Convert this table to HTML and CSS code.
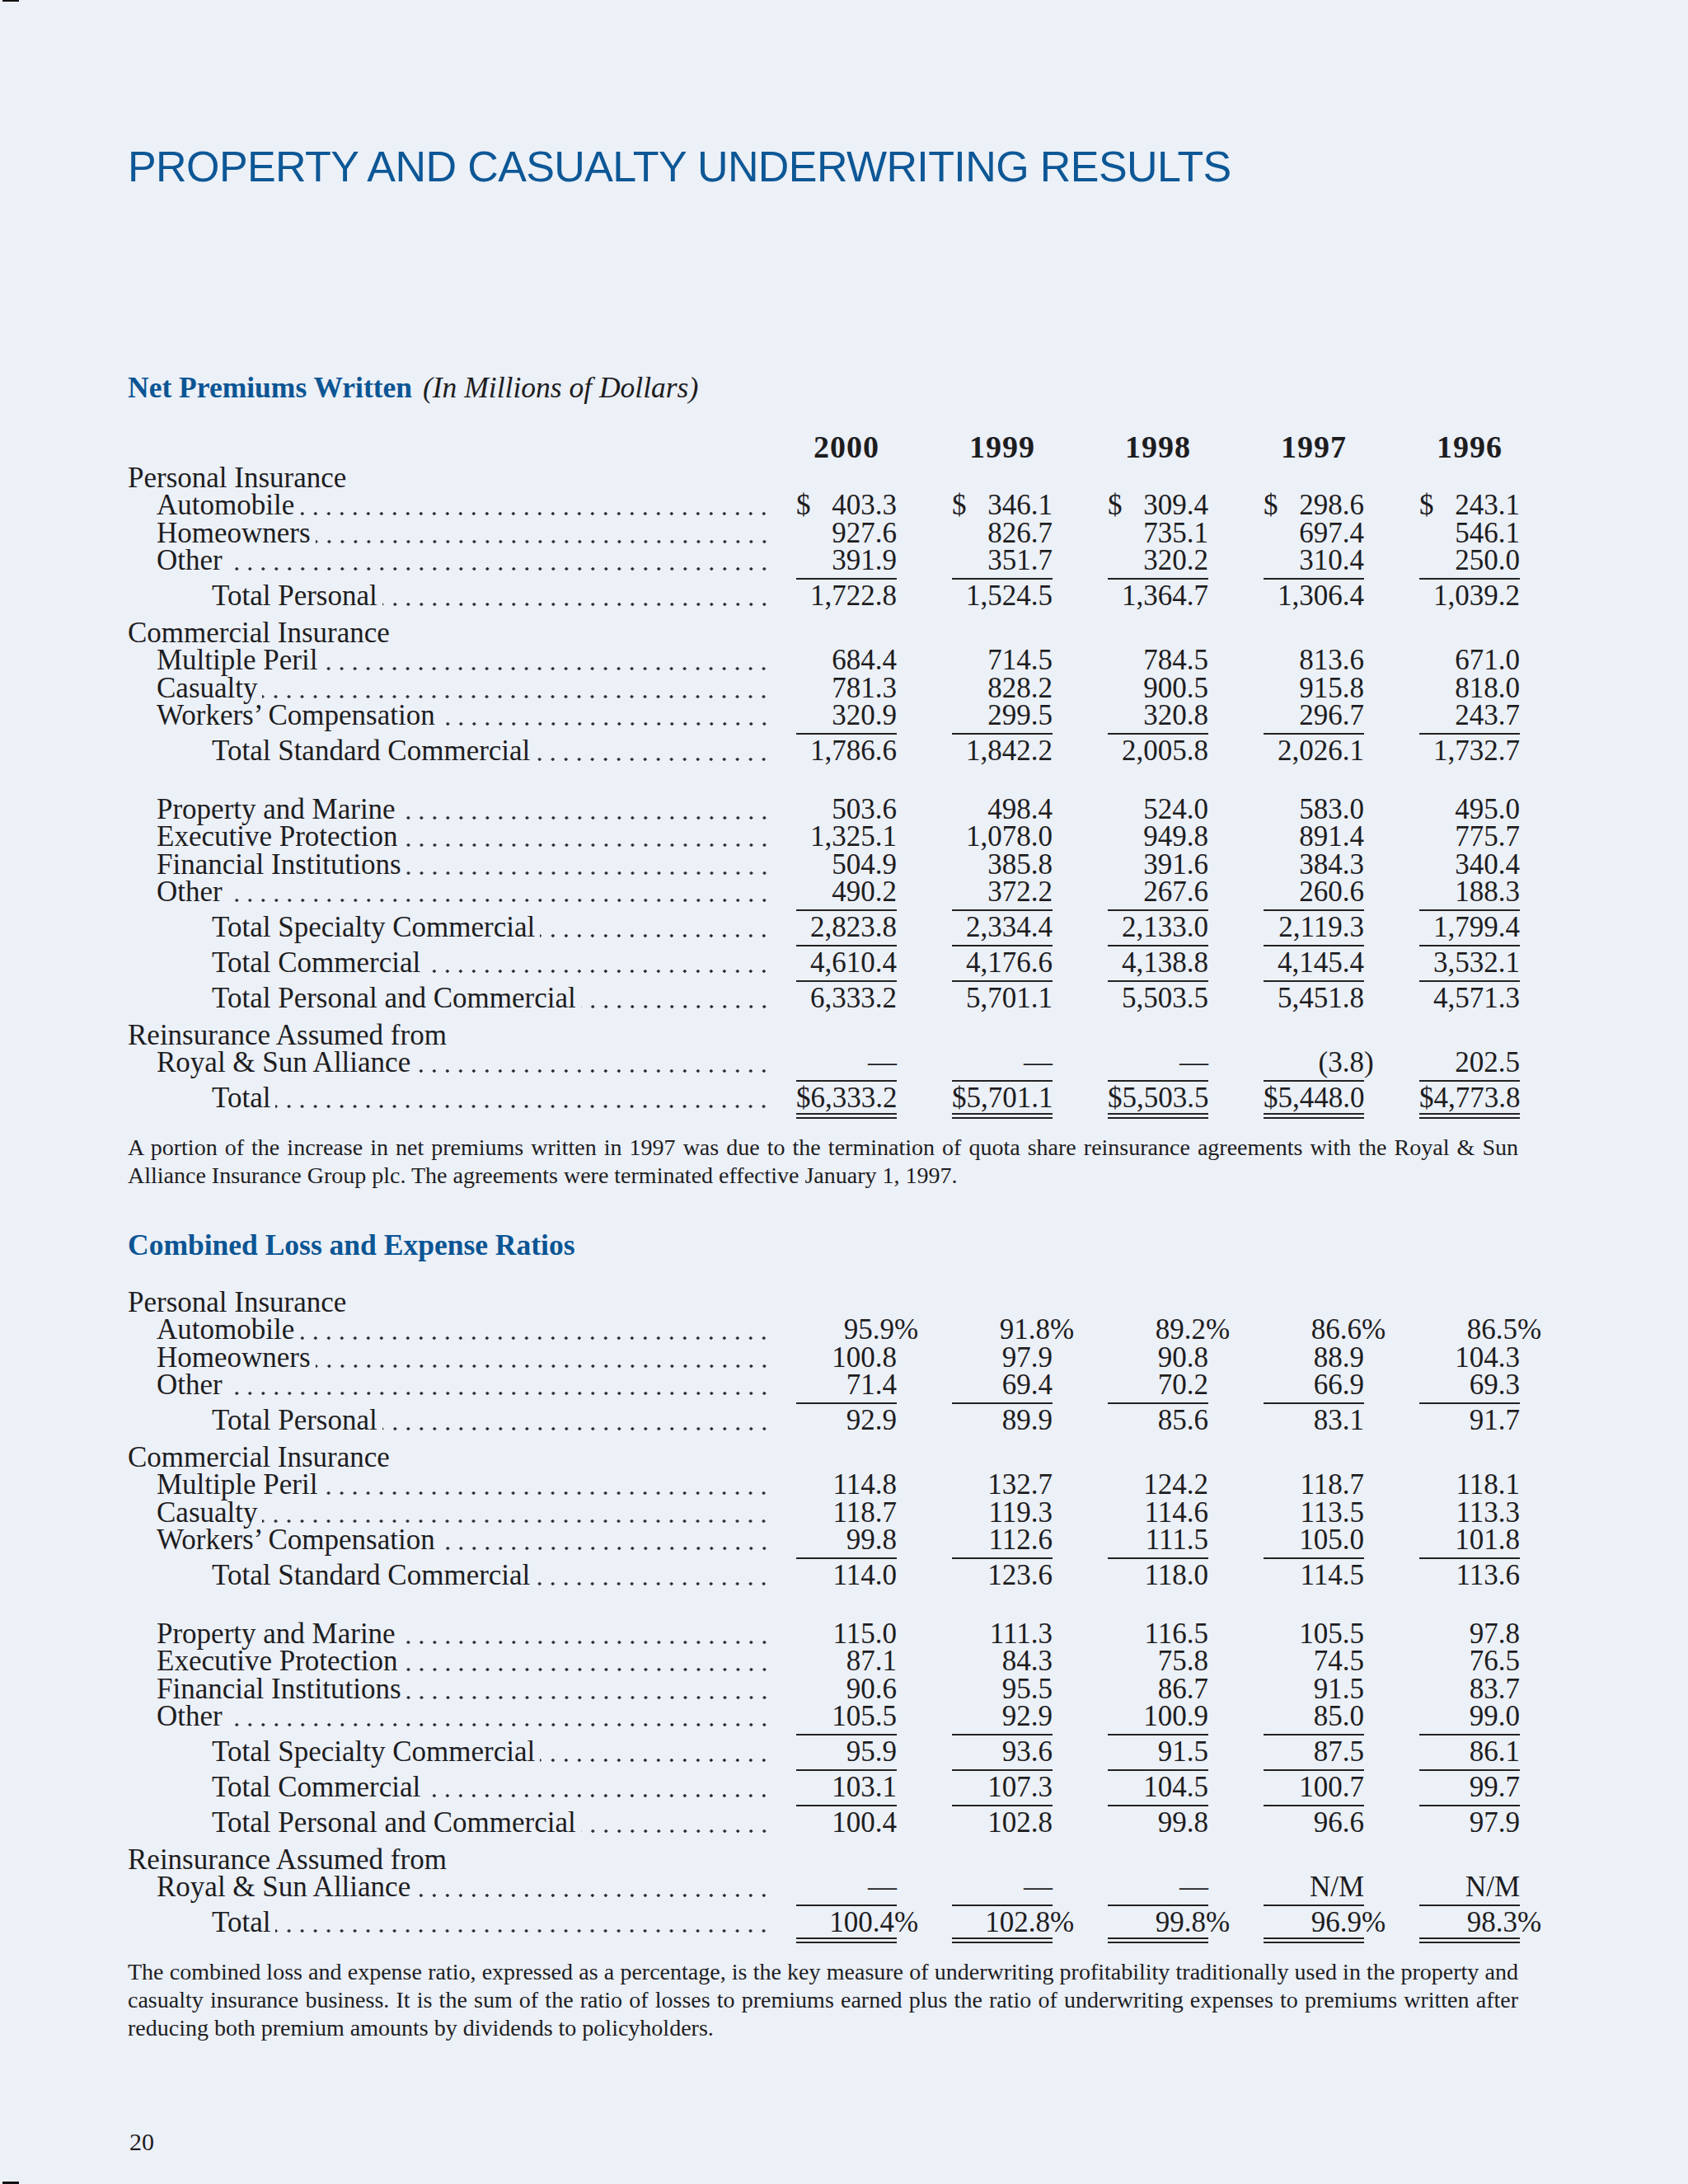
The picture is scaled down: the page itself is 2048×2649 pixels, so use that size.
FILE: index.html
```html
<!DOCTYPE html>
<html>
<head>
    <title>Property and Casualty Underwriting Results</title>
    <link rel="stylesheet" href="styles.css">
</head>
<body>
    <div class="crop"></div>
    <div class="page">
        <h1 class="title">PROPERTY AND CASUALTY UNDERWRITING RESULTS</h1>

        <h2 class="section first">Net Premiums Written <em>(In Millions of Dollars)</em></h2>
        <div class="table net">
            <div class="row years">
                <div class="label"></div>
                <div class="vals"><div class="v">2000</div><div class="v">1999</div><div class="v">1998</div><div class="v">1997</div><div class="v">1996</div></div>
            </div>
            <div class="row">
                <div class="label"><span>Personal Insurance</span></div>
            </div>
            <div class="row">
                <div class="label l1"><span>Automobile</span><span class="dots"></span></div>
                <div class="vals">
                    <div class="v cur"><span>$</span><span>403.3</span></div>
                    <div class="v cur"><span>$</span><span>346.1</span></div>
                    <div class="v cur"><span>$</span><span>309.4</span></div>
                    <div class="v cur"><span>$</span><span>298.6</span></div>
                    <div class="v cur"><span>$</span><span>243.1</span></div>
                </div>
            </div>
            <div class="row">
                <div class="label l1"><span>Homeowners</span><span class="dots"></span></div>
                <div class="vals"><div class="v">927.6</div><div class="v">826.7</div><div class="v">735.1</div><div class="v">697.4</div><div class="v">546.1</div></div>
            </div>
            <div class="row">
                <div class="label l1"><span>Other</span><span class="dots"></span></div>
                <div class="vals"><div class="v">391.9</div><div class="v">351.7</div><div class="v">320.2</div><div class="v">310.4</div><div class="v">250.0</div></div>
            </div>
            <div class="row total">
                <div class="label l2"><span>Total Personal</span><span class="dots"></span></div>
                <div class="vals"><div class="v">1,722.8</div><div class="v">1,524.5</div><div class="v">1,364.7</div><div class="v">1,306.4</div><div class="v">1,039.2</div></div>
            </div>
            <div class="row group">
                <div class="label"><span>Commercial Insurance</span></div>
            </div>
            <div class="row">
                <div class="label l1"><span>Multiple Peril</span><span class="dots"></span></div>
                <div class="vals"><div class="v">684.4</div><div class="v">714.5</div><div class="v">784.5</div><div class="v">813.6</div><div class="v">671.0</div></div>
            </div>
            <div class="row">
                <div class="label l1"><span>Casualty</span><span class="dots"></span></div>
                <div class="vals"><div class="v">781.3</div><div class="v">828.2</div><div class="v">900.5</div><div class="v">915.8</div><div class="v">818.0</div></div>
            </div>
            <div class="row">
                <div class="label l1"><span>Workers’ Compensation</span><span class="dots"></span></div>
                <div class="vals"><div class="v">320.9</div><div class="v">299.5</div><div class="v">320.8</div><div class="v">296.7</div><div class="v">243.7</div></div>
            </div>
            <div class="row total">
                <div class="label l2"><span>Total Standard Commercial</span><span class="dots"></span></div>
                <div class="vals"><div class="v">1,786.6</div><div class="v">1,842.2</div><div class="v">2,005.8</div><div class="v">2,026.1</div><div class="v">1,732.7</div></div>
            </div>
            <div class="row sep">
                <div class="label l1"><span>Property and Marine</span><span class="dots"></span></div>
                <div class="vals"><div class="v">503.6</div><div class="v">498.4</div><div class="v">524.0</div><div class="v">583.0</div><div class="v">495.0</div></div>
            </div>
            <div class="row">
                <div class="label l1"><span>Executive Protection</span><span class="dots"></span></div>
                <div class="vals"><div class="v">1,325.1</div><div class="v">1,078.0</div><div class="v">949.8</div><div class="v">891.4</div><div class="v">775.7</div></div>
            </div>
            <div class="row">
                <div class="label l1"><span>Financial Institutions</span><span class="dots"></span></div>
                <div class="vals"><div class="v">504.9</div><div class="v">385.8</div><div class="v">391.6</div><div class="v">384.3</div><div class="v">340.4</div></div>
            </div>
            <div class="row">
                <div class="label l1"><span>Other</span><span class="dots"></span></div>
                <div class="vals"><div class="v">490.2</div><div class="v">372.2</div><div class="v">267.6</div><div class="v">260.6</div><div class="v">188.3</div></div>
            </div>
            <div class="row total">
                <div class="label l2"><span>Total Specialty Commercial</span><span class="dots"></span></div>
                <div class="vals"><div class="v">2,823.8</div><div class="v">2,334.4</div><div class="v">2,133.0</div><div class="v">2,119.3</div><div class="v">1,799.4</div></div>
            </div>
            <div class="row total">
                <div class="label l2"><span>Total Commercial</span><span class="dots"></span></div>
                <div class="vals"><div class="v">4,610.4</div><div class="v">4,176.6</div><div class="v">4,138.8</div><div class="v">4,145.4</div><div class="v">3,532.1</div></div>
            </div>
            <div class="row total">
                <div class="label l2"><span>Total Personal and Commercial</span><span class="dots"></span></div>
                <div class="vals"><div class="v">6,333.2</div><div class="v">5,701.1</div><div class="v">5,503.5</div><div class="v">5,451.8</div><div class="v">4,571.3</div></div>
            </div>
            <div class="row group">
                <div class="label"><span>Reinsurance Assumed from</span></div>
            </div>
            <div class="row">
                <div class="label l1"><span>Royal &amp; Sun Alliance</span><span class="dots"></span></div>
                <div class="vals"><div class="v">—</div><div class="v">—</div><div class="v">—</div><div class="v">(3.8<span class="paren">)</span></div><div class="v">202.5</div></div>
            </div>
            <div class="row total grand">
                <div class="label l2"><span>Total</span><span class="dots"></span></div>
                <div class="vals"><div class="v">$6,333.2</div><div class="v">$5,701.1</div><div class="v">$5,503.5</div><div class="v">$5,448.0</div><div class="v">$4,773.8</div></div>
            </div>
        </div>
        <p class="note">A portion of the increase in net premiums written in 1997 was due to the termination of quota share reinsurance agreements with the Royal &amp; Sun Alliance Insurance Group plc. The agreements were terminated effective January 1, 1997.</p>

        <h2 class="section second">Combined Loss and Expense Ratios</h2>
        <div class="table ratios">
            <div class="row">
                <div class="label"><span>Personal Insurance</span></div>
            </div>
            <div class="row">
                <div class="label l1"><span>Automobile</span><span class="dots"></span></div>
                <div class="vals"><div class="v">95.9<span class="pct">%</span></div><div class="v">91.8<span class="pct">%</span></div><div class="v">89.2<span class="pct">%</span></div><div class="v">86.6<span class="pct">%</span></div><div class="v">86.5<span class="pct">%</span></div></div>
            </div>
            <div class="row">
                <div class="label l1"><span>Homeowners</span><span class="dots"></span></div>
                <div class="vals"><div class="v">100.8</div><div class="v">97.9</div><div class="v">90.8</div><div class="v">88.9</div><div class="v">104.3</div></div>
            </div>
            <div class="row">
                <div class="label l1"><span>Other</span><span class="dots"></span></div>
                <div class="vals"><div class="v">71.4</div><div class="v">69.4</div><div class="v">70.2</div><div class="v">66.9</div><div class="v">69.3</div></div>
            </div>
            <div class="row total">
                <div class="label l2"><span>Total Personal</span><span class="dots"></span></div>
                <div class="vals"><div class="v">92.9</div><div class="v">89.9</div><div class="v">85.6</div><div class="v">83.1</div><div class="v">91.7</div></div>
            </div>
            <div class="row group">
                <div class="label"><span>Commercial Insurance</span></div>
            </div>
            <div class="row">
                <div class="label l1"><span>Multiple Peril</span><span class="dots"></span></div>
                <div class="vals"><div class="v">114.8</div><div class="v">132.7</div><div class="v">124.2</div><div class="v">118.7</div><div class="v">118.1</div></div>
            </div>
            <div class="row">
                <div class="label l1"><span>Casualty</span><span class="dots"></span></div>
                <div class="vals"><div class="v">118.7</div><div class="v">119.3</div><div class="v">114.6</div><div class="v">113.5</div><div class="v">113.3</div></div>
            </div>
            <div class="row">
                <div class="label l1"><span>Workers’ Compensation</span><span class="dots"></span></div>
                <div class="vals"><div class="v">99.8</div><div class="v">112.6</div><div class="v">111.5</div><div class="v">105.0</div><div class="v">101.8</div></div>
            </div>
            <div class="row total">
                <div class="label l2"><span>Total Standard Commercial</span><span class="dots"></span></div>
                <div class="vals"><div class="v">114.0</div><div class="v">123.6</div><div class="v">118.0</div><div class="v">114.5</div><div class="v">113.6</div></div>
            </div>
            <div class="row sep">
                <div class="label l1"><span>Property and Marine</span><span class="dots"></span></div>
                <div class="vals"><div class="v">115.0</div><div class="v">111.3</div><div class="v">116.5</div><div class="v">105.5</div><div class="v">97.8</div></div>
            </div>
            <div class="row">
                <div class="label l1"><span>Executive Protection</span><span class="dots"></span></div>
                <div class="vals"><div class="v">87.1</div><div class="v">84.3</div><div class="v">75.8</div><div class="v">74.5</div><div class="v">76.5</div></div>
            </div>
            <div class="row">
                <div class="label l1"><span>Financial Institutions</span><span class="dots"></span></div>
                <div class="vals"><div class="v">90.6</div><div class="v">95.5</div><div class="v">86.7</div><div class="v">91.5</div><div class="v">83.7</div></div>
            </div>
            <div class="row">
                <div class="label l1"><span>Other</span><span class="dots"></span></div>
                <div class="vals"><div class="v">105.5</div><div class="v">92.9</div><div class="v">100.9</div><div class="v">85.0</div><div class="v">99.0</div></div>
            </div>
            <div class="row total">
                <div class="label l2"><span>Total Specialty Commercial</span><span class="dots"></span></div>
                <div class="vals"><div class="v">95.9</div><div class="v">93.6</div><div class="v">91.5</div><div class="v">87.5</div><div class="v">86.1</div></div>
            </div>
            <div class="row total">
                <div class="label l2"><span>Total Commercial</span><span class="dots"></span></div>
                <div class="vals"><div class="v">103.1</div><div class="v">107.3</div><div class="v">104.5</div><div class="v">100.7</div><div class="v">99.7</div></div>
            </div>
            <div class="row total">
                <div class="label l2"><span>Total Personal and Commercial</span><span class="dots"></span></div>
                <div class="vals"><div class="v">100.4</div><div class="v">102.8</div><div class="v">99.8</div><div class="v">96.6</div><div class="v">97.9</div></div>
            </div>
            <div class="row group">
                <div class="label"><span>Reinsurance Assumed from</span></div>
            </div>
            <div class="row">
                <div class="label l1"><span>Royal &amp; Sun Alliance</span><span class="dots"></span></div>
                <div class="vals"><div class="v">—</div><div class="v">—</div><div class="v">—</div><div class="v">N/M</div><div class="v">N/M</div></div>
            </div>
            <div class="row total grand">
                <div class="label l2"><span>Total</span><span class="dots"></span></div>
                <div class="vals"><div class="v">100.4<span class="pct">%</span></div><div class="v">102.8<span class="pct">%</span></div><div class="v">99.8<span class="pct">%</span></div><div class="v">96.9<span class="pct">%</span></div><div class="v">98.3<span class="pct">%</span></div></div>
            </div>
        </div>
        <p class="note">The combined loss and expense ratio, expressed as a percentage, is the key measure of underwriting profitability traditionally used in the property and casualty insurance business. It is the sum of the ratio of losses to premiums earned plus the ratio of underwriting expenses to premiums written after reducing both premium amounts by dividends to policyholders.</p>

        <p class="folio">20</p>
    </div>
    <div class="crop bottom"></div>
</body>
</html>
```

FILE: styles.css
```css
* {
    box-sizing: border-box;
}
body {
    margin: 0;
    min-height: 2649px;
    display: flex;
    flex-direction: column;
    background-color: #ecf0f7;
    color: #1d1d1f;
    font-family: "Liberation Serif", "Times New Roman", serif;
}
.crop {
    width: 20px;
    height: 2px;
    margin-left: 3px;
    background-color: #111;
}
.crop.bottom {
    height: 3px;
    margin-top: auto;
}
.page {
    padding-left: 155px;
}
.title {
    margin: 170px 0 0;
    font-family: "Liberation Sans", Arial, sans-serif;
    font-weight: normal;
    font-size: 52px;
    line-height: 60px;
    letter-spacing: -0.6px;
    color: #0d5796;
}
.section {
    margin: 0;
    font-size: 35.5px;
    line-height: 33.5px;
    font-weight: bold;
    color: #0b5594;
}
.section em {
    font-weight: normal;
    color: #1d1d1f;
    margin-left: 4px;
}
.section.first {
    margin-top: 222px;
}
.section.second {
    margin-top: 51px;
}
.table {
    font-size: 35px;
    line-height: 33.5px;
}
.table.net {
    margin-top: 38px;
}
.table.ratios {
    margin-top: 35.5px;
}
.row {
    display: flex;
    align-items: baseline;
}
.row.years {
    margin-bottom: 3.5px;
}
.row.group {
    margin-top: 11px;
}
.row.sep {
    margin-top: 37px;
}
.row.total {
    margin-top: 4px;
}
.label {
    flex: none;
    width: 780px;
    display: flex;
    white-space: nowrap;
}
.label.l1 {
    padding-left: 35px;
}
.label.l2 {
    padding-left: 102px;
}
.dots {
    flex: 1;
    margin-left: 6px;
    background-image: radial-gradient(circle, #2a2a2a 1.5px, transparent 2px);
    background-size: 16px 4px;
    background-repeat: repeat-x;
    background-position: right 0 bottom 4.5px;
}
.vals {
    display: grid;
    grid-template-columns: repeat(5, 122px);
    column-gap: 67px;
    margin-left: 31px;
}
.v {
    text-align: right;
    white-space: nowrap;
}
.v.cur {
    display: flex;
    justify-content: space-between;
}
.years .v {
    text-align: center;
    font-weight: bold;
    font-size: 38px;
    letter-spacing: 1px;
}
.total .v {
    border-top: 2px solid #222;
    padding-top: 3.5px;
}
.grand .v {
    border-bottom: 7px double #222;
    padding-bottom: 1px;
}
.pct {
    margin-right: -0.75em;
}
.paren {
    margin-right: -0.333em;
}
.note {
    width: 1687px;
    margin: 18px 0 0;
    font-size: 28px;
    line-height: 34px;
    text-align: justify;
}
.folio {
    margin: 104px 0 0;
    padding-left: 2px;
    font-size: 30px;
    line-height: 34px;
}
```
